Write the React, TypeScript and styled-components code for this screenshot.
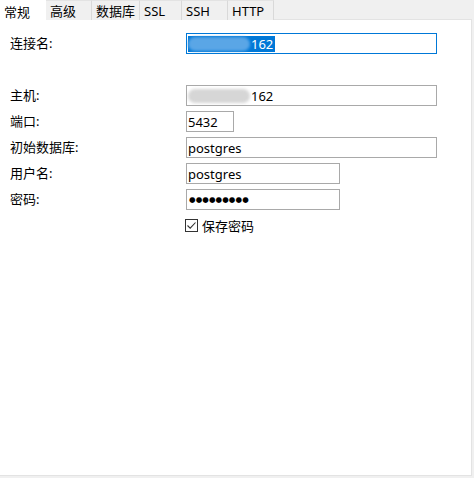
import React, { ReactElement } from 'react'
import styled, { createGlobalStyle } from 'styled-components'

const GlobalStyle = createGlobalStyle`
    html, body {
        margin: 0;
        padding: 0;
        background-color: #f0f0f0;
        font-family: "Noto Sans", "Noto Sans CJK SC", sans-serif;
        color: #000;
    }
`

interface TabItemProps {
    $active: boolean;
    $narrow?: boolean;
}
interface FieldProps {
    $width: number;
    $focused?: boolean;
}
interface BlobProps {
    $selected?: boolean;
}

const Window = styled.div`
    width: 472px;
    height: 476px;
    display: flex;
    flex-direction: column;
`
const TabStrip = styled.div`
    display: flex;
    height: 20px;
    border-bottom: 1px solid #e3e3e3;
    box-sizing: border-box;
`
const TabItem = styled.div<TabItemProps>`
    min-width: ${(p): string => p.$narrow ? '42px' : '46px'};
    padding: 0 4px;
    box-sizing: border-box;
    display: flex;
    align-items: center;
    font-size: 13px;
    height: ${(p): string => p.$active ? '21px' : '20px'};
    background-color: ${(p): string => p.$active ? '#ffffff' : '#f0f0f0'};
    border-right: 1px solid ${(p): string => p.$active ? '#ffffff' : '#d9d9d9'};
    border-top: 1px solid ${(p): string => p.$active ? '#ffffff' : '#e3e3e3'};
    position: relative;
    z-index: ${(p): number => p.$active ? 1 : 0};
`
const Panel = styled.div`
    flex: 1;
    background-color: #ffffff;
    border-right: 1px solid #e3e3e3;
    border-bottom: 1px solid #e3e3e3;
    padding: 13px 0 0 10px;
`
const Form = styled.div`
    display: grid;
    grid-template-columns: 176px 1fr;
    grid-auto-rows: 21px;
    row-gap: 5px;
    align-items: center;
`
const Label = styled.div`
    font-size: 13px;
    line-height: 21px;
`
const Spacer = styled.div`
    grid-column: 1 / span 2;
`
const Field = styled.div<FieldProps>`
    width: ${(p): string => p.$width + 'px'};
    height: 21px;
    box-sizing: border-box;
    border: 1px solid ${(p): string => p.$focused ? '#0078d7' : '#a9a9a9'};
    display: flex;
    align-items: center;
    padding: 0 1px;
    font-size: 13px;
    white-space: nowrap;
    overflow: hidden;
`
const Selection = styled.span`
    display: inline-flex;
    align-items: center;
    height: 16px;
    padding-right: 2px;
    background-color: #0078d7;
    color: #ffffff;
`
const Blob = styled.span<BlobProps>`
    display: inline-block;
    width: 62px;
    height: 14px;
    border-radius: 7px;
    background-color: ${(p): string => p.$selected ? '#5aa6e6' : '#d6d6d6'};
    filter: blur(1.5px);
    margin-right: 1px;
`
const Password = styled.span`
    font-family: "DejaVu Sans", sans-serif;
    font-size: 7.5px;
    letter-spacing: 0.1px;
    padding-left: 1px;
`
const CheckRow = styled.div`
    grid-column: 2;
    display: flex;
    align-items: center;
    gap: 4px;
    font-size: 13px;
    margin-left: -1px;
`
const CheckBox = styled.span`
    width: 13px;
    height: 13px;
    box-sizing: border-box;
    border: 1px solid #333333;
    background-color: #ffffff;
    display: flex;
    align-items: center;
    justify-content: center;
`

const tabs = ['常规', '高级', '数据库', 'SSL', 'SSH', 'HTTP']

export default function App(): ReactElement {
    return (
        <>
            <GlobalStyle />
            <Window>
                <TabStrip>
                    {tabs.map((t, i): JSX.Element => (
                        <TabItem key={t} $active={i === 0} $narrow={t === 'SSL'}>{t}</TabItem>
                    ))}
                </TabStrip>
                <Panel>
                    <Form>
                        <Label>连接名:</Label>
                        <Field $width={251} $focused>
                            <Selection><Blob $selected />162</Selection>
                        </Field>
                        <Spacer />
                        <Label>主机:</Label>
                        <Field $width={251}><Blob />162</Field>
                        <Label>端口:</Label>
                        <Field $width={48}>5432</Field>
                        <Label>初始数据库:</Label>
                        <Field $width={251}>postgres</Field>
                        <Label>用户名:</Label>
                        <Field $width={154}>postgres</Field>
                        <Label>密码:</Label>
                        <Field $width={154}><Password>●●●●●●●●●</Password></Field>
                        <CheckRow>
                            <CheckBox>
                                <svg width="11" height="11" viewBox="0 0 11 11">
                                    <path d="M1.5 5.5 L4.2 8.2 L9.5 2.5" fill="none" stroke="#333" strokeWidth="1.1" />
                                </svg>
                            </CheckBox>
                            保存密码
                        </CheckRow>
                    </Form>
                </Panel>
            </Window>
        </>
    )
}
